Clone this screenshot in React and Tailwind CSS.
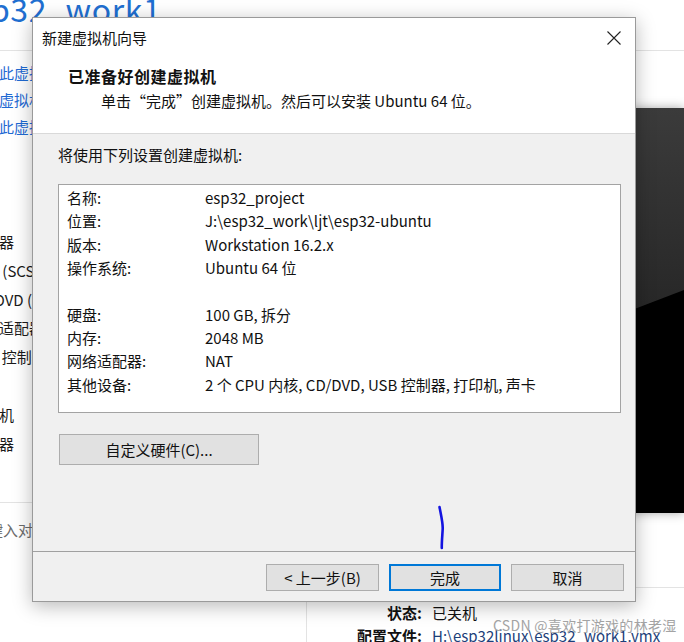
import React from 'react';

const settings = [
  ['名称:', 'esp32_project'],
  ['位置:', 'J:\\esp32_work\\ljt\\esp32-ubuntu'],
  ['版本:', 'Workstation 16.2.x'],
  ['操作系统:', 'Ubuntu 64 位'],
  null,
  ['硬盘:', '100 GB, 拆分'],
  ['内存:', '2048 MB'],
  ['网络适配器:', 'NAT'],
  ['其他设备:', '2 个 CPU 内核, CD/DVD, USB 控制器, 打印机, 声卡'],
];

const devices = ['内存', '处理器', '硬盘 (SCSI)', 'CD/DVD (SATA)', '网络适配器', 'USB 控制器', '声卡', '打印机', '显示器'];

const links = ['开启此虚拟机', '编辑虚拟机设置', '升级此虚拟机'];

const WinButton = ({ children, primary, className = '' }) => (
  <div
    className={`flex items-center justify-center bg-[#e1e1e1] text-[15px] leading-[20px] text-[#111] ${
      primary ? 'border-2 border-[#0078d7]' : 'border border-[#adadad]'
    } ${className}`}
  >
    {children}
  </div>
);

const Background = () => (
  <div className="flex flex-col h-full">
    <div className="h-[51px] border-b border-[#e3e3e3] overflow-hidden">
      <div className="ml-[-44px] mt-[-8px] text-[32px] leading-[32px] tracking-[0.6px] text-[#1f6fd1] whitespace-nowrap">esp32_work1</div>
    </div>
    <div className="flex flex-1 min-h-0">
      {/* device column */}
      <div className="w-[306px] shrink-0 flex flex-col pt-[8px] text-[15px] whitespace-nowrap">
        <div className="ml-[-31px]">
          {links.map((t) => (
            <div key={t} className="h-[27px] leading-[27px] text-[#1f6ad3]">{t}</div>
          ))}
          <div className="mt-[29px] h-[30px] leading-[30px] text-[#222]">设备</div>
          {devices.map((d) => (
            <div key={d} className="h-[28.86px] leading-[28.86px] text-[#1a1a1a]">{d}</div>
          ))}
        </div>
        <div className="mt-[43px] border-t border-[#e3e3e3] pt-[16px]">
          <div className="ml-[-57px] leading-[22px] text-[#6b6b6b]">在此处键入对该虚拟机的描述。</div>
        </div>
      </div>
      {/* preview column */}
      <div className="flex-1 border-l border-[#e3e3e3] flex flex-col">
        <div className="ml-[23px] mt-[57px] w-[354px] h-[405px] bg-black shadow-[0_0_10px_rgba(0,0,0,0.35)] shrink-0">
          <svg width="354" height="405" viewBox="0 0 354 405" className="block">
            <defs>
              <linearGradient id="gloss" x1="0" y1="0" x2="0" y2="1">
                <stop offset="0" stopColor="#3b3b3b" />
                <stop offset="1" stopColor="#1c1c1c" />
              </linearGradient>
            </defs>
            <polygon points="0,0 354,0 354,182 0,318" fill="url(#gloss)" />
          </svg>
        </div>
        <div className="mt-[74px] border-t border-[#e3e3e3] pt-[13px] grid grid-cols-[115px_1fr] gap-x-[10px] text-[15px] leading-[23px] whitespace-nowrap">
          <div className="text-right font-bold text-[#111]">状态:</div>
          <div className="text-[#111]">已关机</div>
          <div className="text-right font-bold text-[#111]">配置文件:</div>
          <div className="text-[#1d3f7a]">H:\esp32linux\esp32_work1.vmx</div>
        </div>
      </div>
    </div>
  </div>
);

const Dialog = () => (
  <div className="absolute left-[32px] top-[17px] w-[604px] h-[585px] border border-[#9a9a9a] bg-[#f0f0f0] shadow-[0_4px_18px_rgba(0,0,0,0.28)] flex flex-col text-[#111]">
    <div className="bg-white border-b border-[#d9d9d9]">
      <div className="h-[40px] flex items-center justify-between pl-[9px] pr-[13px]">
        <span className="text-[15px] leading-[20px] text-[#111]">新建虚拟机向导</span>
        <svg width="16" height="16" viewBox="0 0 16 16">
          <path d="M1.5 1.5 L14.5 14.5 M14.5 1.5 L1.5 14.5" stroke="#222" strokeWidth="1.1" />
        </svg>
      </div>
      <div className="h-[75px] pt-[7px]">
        <div className="pl-[35px] text-[16px] leading-[22px] font-bold tracking-[0.5px]">已准备好创建虚拟机</div>
        <div className="pl-[68px] mt-[3px] text-[15px] leading-[22px]">单击“完成”创建虚拟机。然后可以安装 Ubuntu 64 位。</div>
      </div>
    </div>
    <div className="flex-1 flex flex-col pl-[25px] pt-[10px]">
      <div className="text-[15px] leading-[22px]">将使用下列设置创建虚拟机:</div>
      <div className="mt-[18px] w-[563px] h-[229px] bg-white border border-[#a3a3a3] pt-[1px] pl-[8px] text-[15px]">
        {settings.map((row, i) =>
          row ? (
            <div key={i} className="grid grid-cols-[138px_1fr] h-[23.33px] leading-[23.33px] whitespace-nowrap">
              <span>{row[0]}</span>
              <span>{row[1]}</span>
            </div>
          ) : (
            <div key={i} className="h-[23.33px]" />
          )
        )}
      </div>
      <WinButton className="mt-[21px] ml-[1px] w-[200px] h-[31px]">自定义硬件(C)...</WinButton>
    </div>
    <div className="h-[50px] border-t border-[#a0a0a0] flex justify-end gap-[10px] pr-[11px] pt-[12px]">
      <WinButton className="w-[113px] h-[27px]">&lt; 上一步(B)</WinButton>
      <WinButton primary className="w-[112px] h-[27px]">完成</WinButton>
      <WinButton className="w-[113px] h-[27px]">取消</WinButton>
    </div>
  </div>
);

export default function App() {
  return (
    <div className="relative w-[684px] h-[642px] overflow-hidden bg-white font-['Noto_Sans_CJK_SC','Noto_Sans',sans-serif]">
      <Background />
      <Dialog />
      <svg className="absolute left-[434px] top-[503px]" width="14" height="50" viewBox="0 0 14 50">
        <path d="M5.5 4 C 7 12, 9 20, 8.7 26 S 7.6 40, 7.8 45" fill="none" stroke="#1414e0" strokeWidth="2.6" strokeLinecap="round" />
      </svg>
      <div className="absolute left-[493px] top-[616px] text-[14px] leading-[18px] tracking-[0.3px] text-[#a3a3a3] whitespace-nowrap">
        CSDN @喜欢打游戏的林老湿
      </div>
    </div>
  );
}
